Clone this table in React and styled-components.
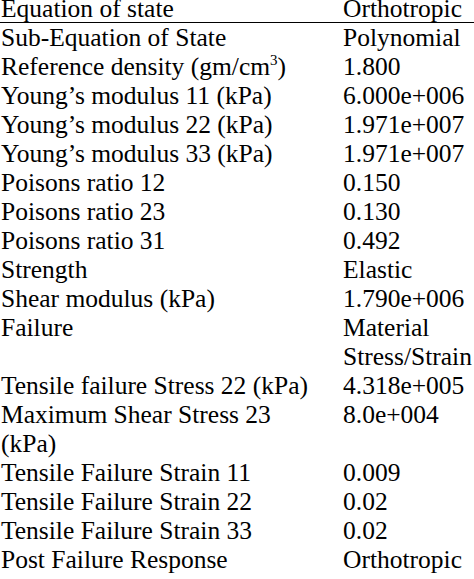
import React from 'react'
import styled, { createGlobalStyle } from 'styled-components'

const GlobalStyle = createGlobalStyle`
  html, body {
    margin: 0;
    padding: 0;
    background: #fff;
  }
`

const Table = styled.div`
  display: grid;
  grid-template-columns: 343px 1fr;
  width: 474px;
  font-family: "Liberation Serif", "Times New Roman", serif;
  font-size: 25.5px;
  color: #000;
`

const Cell = styled.div`
  line-height: 29px;
  padding-left: ${p => (p.$value ? '0' : '1px')};
  padding-right: ${p => (p.$value ? '0' : '20px')};
`

const HeadCell = styled(Cell)`
  line-height: 17.4px;
  padding-bottom: 4.6px;
  border-bottom: 1.5px solid #000;
  white-space: nowrap;
`

const Sup = styled.sup`
  font-size: 15px;
  line-height: 0;
  vertical-align: 10px;
`

const rows = [
  ['Sub-Equation of State', 'Polynomial'],
  [<>Reference density (gm/cm<Sup>3</Sup>)</>, '1.800'],
  ['Young’s modulus 11 (kPa)', '6.000e+006'],
  ['Young’s modulus 22 (kPa)', '1.971e+007'],
  ['Young’s modulus 33 (kPa)', '1.971e+007'],
  ['Poisons ratio 12', '0.150'],
  ['Poisons ratio 23', '0.130'],
  ['Poisons ratio 31', '0.492'],
  ['Strength', 'Elastic'],
  ['Shear modulus (kPa)', '1.790e+006'],
  ['Failure', 'Material Stress/Strain'],
  ['Tensile failure Stress 22 (kPa)', '4.318e+005'],
  ['Maximum Shear Stress 23 (kPa)', '8.0e+004'],
  ['Tensile Failure Strain 11', '0.009'],
  ['Tensile Failure Strain 22', '0.02'],
  ['Tensile Failure Strain 33', '0.02'],
  ['Post Failure Response', 'Orthotropic'],
]

function App() {
  return (
    <>
      <GlobalStyle />
      <Table>
        <HeadCell>Equation of state</HeadCell>
        <HeadCell $value>Orthotropic</HeadCell>
        {rows.map(([label, value], i) => (
          <React.Fragment key={i}>
            <Cell>{label}</Cell>
            <Cell $value>{value}</Cell>
          </React.Fragment>
        ))}
      </Table>
    </>
  )
}

export default App
